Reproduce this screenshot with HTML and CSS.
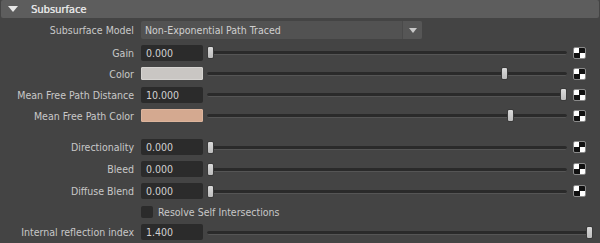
FILE: index.html
```html
<!DOCTYPE html>
<html lang="en">
<head>
    <meta charset="UTF-8">
    <title>Subsurface</title>
    <link rel="stylesheet" href="styles.css">
</head>
<body>

    <div class="panel">
        <div class="section-header"><span class="caret"></span>Subsurface</div>

        <div class="row row-model">
            <span class="lbl">Subsurface Model</span>
            <div class="dropdown">
                <span class="dd-text">Non-Exponential Path Traced</span>
                <span class="dd-btn"><span class="dd-arrow"></span></span>
            </div>
        </div>

        <div class="row">
            <span class="lbl">Gain</span>
            <div class="field">0.000</div>
            <div class="slider"><div class="thumb" style="--v:0"></div></div>
            <span class="map-btn"></span>
        </div>
        <div class="row">
            <span class="lbl">Color</span>
            <div class="swatch swatch-grey"></div>
            <div class="slider"><div class="thumb" style="--v:0.833"></div></div>
            <span class="map-btn"></span>
        </div>
        <div class="row">
            <span class="lbl">Mean Free Path Distance</span>
            <div class="field">10.000</div>
            <div class="slider"><div class="thumb" style="--v:1"></div></div>
            <span class="map-btn"></span>
        </div>
        <div class="row">
            <span class="lbl">Mean Free Path Color</span>
            <div class="swatch swatch-peach"></div>
            <div class="slider"><div class="thumb" style="--v:0.85"></div></div>
            <span class="map-btn"></span>
        </div>

        <div class="spacer"></div>

        <div class="row row-tall">
            <span class="lbl">Directionality</span>
            <div class="field">0.000</div>
            <div class="slider"><div class="thumb" style="--v:0"></div></div>
            <span class="map-btn"></span>
        </div>
        <div class="row row-tall">
            <span class="lbl">Bleed</span>
            <div class="field">0.000</div>
            <div class="slider"><div class="thumb" style="--v:0"></div></div>
            <span class="map-btn"></span>
        </div>
        <div class="row row-tall">
            <span class="lbl">Diffuse Blend</span>
            <div class="field">0.000</div>
            <div class="slider"><div class="thumb" style="--v:0"></div></div>
            <span class="map-btn"></span>
        </div>
        <div class="row row-check">
            <span class="lbl"></span>
            <span class="checkbox"></span>
            <span class="check-label">Resolve Self Intersections</span>
        </div>
        <div class="row row-tall">
            <span class="lbl">Internal reflection index</span>
            <div class="field">1.400</div>
            <div class="slider slider-wide"><div class="thumb" style="--v:1"></div></div>
        </div>
    </div>

</body>
</html>
```

FILE: styles.css
```css
body {
    margin: 0;
    background-color: #444444;
    font-family: "DejaVu Sans Condensed", "DejaVu Sans", sans-serif;
    font-size: 10.5px;
    color: #c8c8c8;
    overflow: hidden;
}
.panel {
    display: flex;
    flex-direction: column;
}
.section-header {
    height: 18px;
    margin: 0 1px;
    background-color: #5d5d5d;
    border-radius: 2px;
    display: flex;
    align-items: center;
    font-size: 11px;
    color: #e2e2e2;
    text-shadow: 0.3px 0 0 #e2e2e2;
}
.caret {
    width: 0;
    height: 0;
    margin: 0 13px 1px 7px;
    border-left: 5px solid transparent;
    border-right: 5px solid transparent;
    border-top: 6px solid #e8e8e8;
}
.row {
    display: flex;
    align-items: center;
    height: 21px;
}
.row-model {
    height: 24px;
}
.row-tall {
    height: 22px;
}
.row-check {
    height: 19px;
}
.spacer {
    height: 10px;
}
.lbl {
    width: 134px;
    flex: none;
    text-align: right;
    margin-right: 7px;
    white-space: nowrap;
}
.dropdown {
    width: 281px;
    height: 18px;
    box-sizing: border-box;
    display: flex;
    align-items: center;
    background-color: #525252;
    border-radius: 2px;
    color: #cfcfcf;
}
.dd-text {
    flex: 1;
    padding-left: 4px;
}
.dd-btn {
    width: 19px;
    height: 100%;
    border-left: 1px solid #4a4a4a;
    background-color: #565656;
    border-radius: 0 2px 2px 0;
    display: flex;
    align-items: center;
    justify-content: center;
}
.dd-arrow {
    width: 0;
    height: 0;
    border-left: 4px solid transparent;
    border-right: 4px solid transparent;
    border-top: 5px solid #c8c8c8;
}
.field {
    width: 62px;
    height: 16px;
    box-sizing: border-box;
    flex: none;
    background-color: #2b2b2b;
    border-radius: 2px;
    padding-left: 5px;
    line-height: 16px;
    color: #d2d2d2;
}
.swatch {
    width: 62px;
    height: 13px;
    box-sizing: border-box;
    flex: none;
    border-radius: 1px;
}
.swatch-grey {
    background-color: #c9c6c3;
    border: 1px solid #d6d4d1;
}
.swatch-peach {
    background-color: #d4a990;
    border: 1px solid #dcb49c;
}
.slider {
    flex: 1;
    position: relative;
    height: 13px;
    margin: 0 6px 0 4px;
}
.slider::before {
    content: "";
    position: absolute;
    left: 0;
    right: 0;
    top: 5px;
    height: 3px;
    background-color: #2a2a2a;
    border-bottom: 1px solid #555555;
    border-radius: 2px;
}
.slider-wide {
    margin-right: 7px;
}
.thumb {
    position: absolute;
    top: 0;
    left: calc((100% - 7px) * var(--v));
    width: 7px;
    height: 13px;
    box-sizing: border-box;
    border: 1px solid #3a3a3a;
    border-radius: 2px;
    background: linear-gradient(#dadada, #bdbdbd);
}
.map-btn {
    width: 13px;
    height: 12px;
    box-sizing: border-box;
    flex: none;
    margin-right: 14px;
    border: 1px solid #8a8a8a;
    border-radius: 2px;
    background: conic-gradient(#111 0 25%, #fff 0 50%, #111 0 75%, #fff 0);
}
.checkbox {
    width: 12px;
    height: 12px;
    flex: none;
    background-color: #2b2b2b;
    border-radius: 2px;
    margin-right: 5px;
}
.check-label {
    color: #c8c8c8;
}
```
